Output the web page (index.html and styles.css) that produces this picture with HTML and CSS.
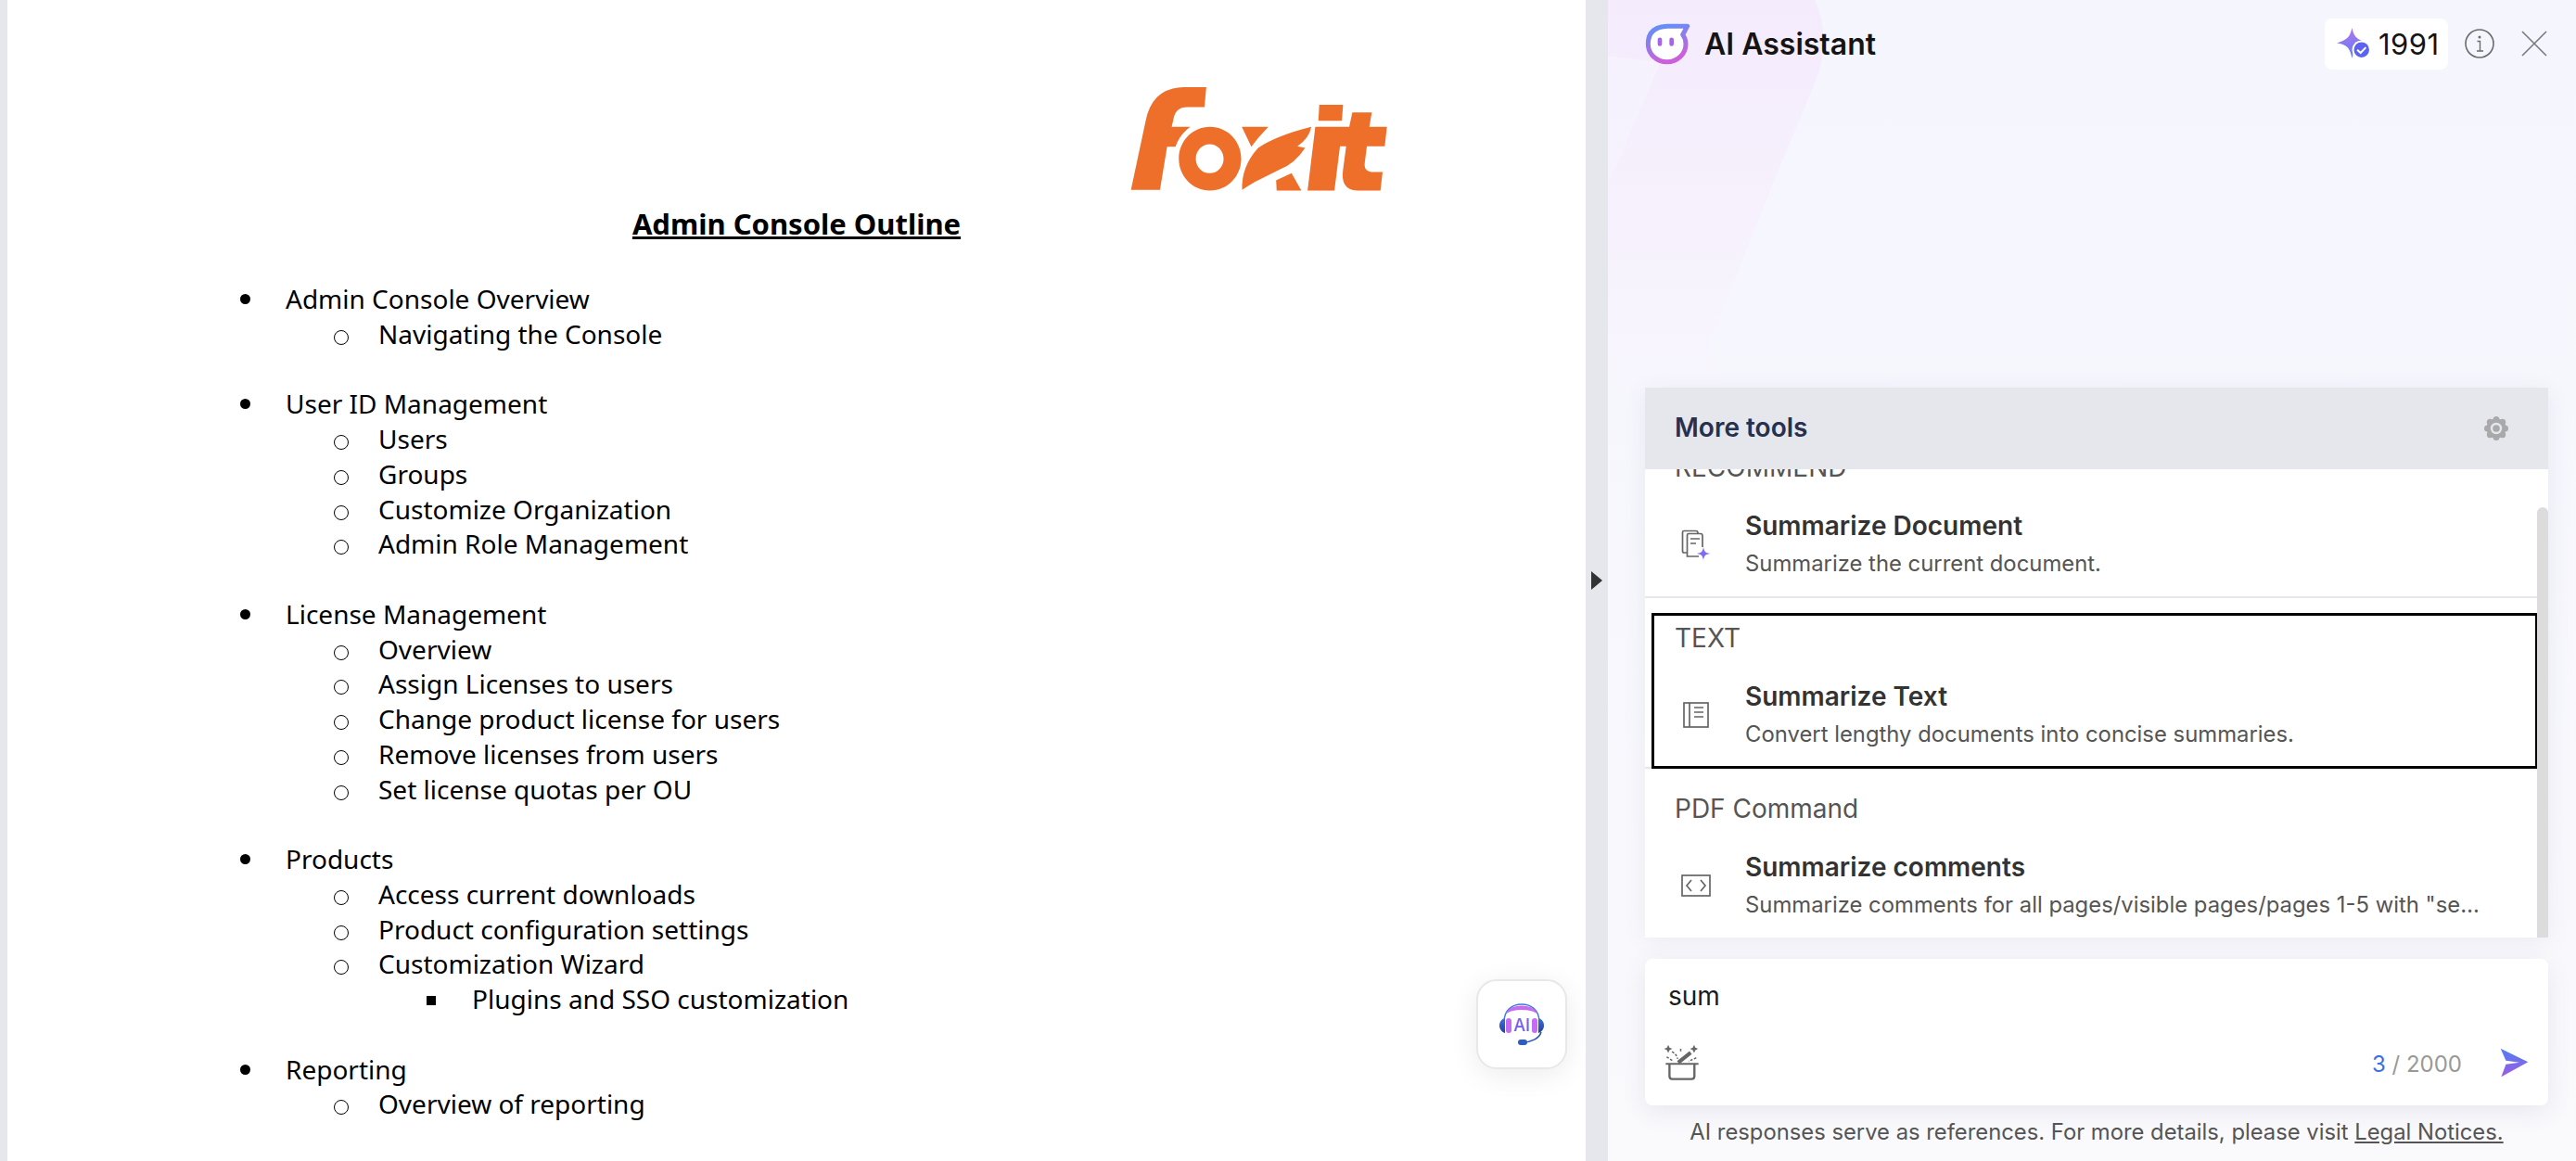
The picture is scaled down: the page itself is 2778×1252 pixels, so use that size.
FILE: index.html
```html
<!DOCTYPE html>
<html lang="en">
<head>
<meta charset="utf-8">
<title>Admin Console Outline - AI Assistant</title>
<link rel="stylesheet" href="styles.css">
</head>
<body>
<div class="app">
  <div class="strip"></div>
  <main class="page">
    <svg class="logo" viewBox="50 95 850 350" width="283" height="117" aria-label="Foxit">
      <g fill="#ee6f2a">
        <path d="M58 436 L105 215 Q125 105 230 103 L302 103 L296 168 L240 168 Q205 168 197 200 L190 232 L250 232 Q215 258 202 296 L175 296 L152 436 Z"/>
        <path fill-rule="evenodd" d="M314 232 C370 232 415 278 415 335 C415 392 370 438 314 438 C258 438 213 392 213 335 C213 278 258 232 314 232 Z M313 288 C288 288 268 309 268 335 C268 361 288 382 313 382 C338 382 358 361 358 335 C358 309 338 288 313 288 Z"/>
        <path d="M417 232 L503 232 L470 268 L448 296 Z"/>
        <path d="M528 405 L578 382 L610 438 L530 438 Z"/>
        <path d="M418 436 Q415 360 470 300 Q530 260 642 232 Q635 270 597 295 L622 300 Q590 350 540 370 Q490 395 460 410 Q435 425 418 436 Z"/>
        <path d="M668 160 L745 160 L741 212 L665 212 Z"/>
        <path d="M630 438 L655 232 L765 232 L775 185 L838 185 L830 232 L887 232 L880 295 L822 295 L815 350 Q812 378 845 378 L873 378 L866 438 L790 438 Q735 436 745 370 L755 295 L735 295 L717 438 Z"/>
      </g>
    </svg>
    <h1 class="doc-title">Admin Console Outline</h1>
    <ul class="l1">
      <li>Admin Console Overview
        <ul class="l2"><li>Navigating the Console</li></ul>
      </li>
      <li>User ID Management
        <ul class="l2">
          <li>Users</li><li>Groups</li><li>Customize Organization</li><li>Admin Role Management</li>
        </ul>
      </li>
      <li>License Management
        <ul class="l2">
          <li>Overview</li><li>Assign Licenses to users</li><li>Change product license for users</li><li>Remove licenses from users</li><li>Set license quotas per OU</li>
        </ul>
      </li>
      <li>Products
        <ul class="l2">
          <li>Access current downloads</li><li>Product configuration settings</li>
          <li>Customization Wizard
            <ul class="l3"><li>Plugins and SSO customization</li></ul>
          </li>
        </ul>
      </li>
      <li>Reporting
        <ul class="l2"><li>Overview of reporting</li></ul>
      </li>
    </ul>
    <button class="help-fab" type="button" aria-label="AI support">
      <svg viewBox="0 0 56 56" width="56" height="56">
        <defs>
          <linearGradient id="cup" x1="0" y1="0" x2="0" y2="1"><stop offset="0" stop-color="#3f6fd8"/><stop offset="1" stop-color="#243f9c"/></linearGradient>
          <linearGradient id="aiText" x1="0" y1="0" x2="0" y2="1"><stop offset="0" stop-color="#8a5cf0"/><stop offset="1" stop-color="#5a62e8"/></linearGradient>
        </defs>
        <path d="M9 25 C9 12 18 6 28 6 C38 6 47 12 47 25" fill="none" stroke="#3f79dc" stroke-width="1.4"/>
        <path d="M12 15 C18 6 38 6 44 15 C38 10 18 10 12 15 Z" fill="#c56cf2" stroke="#c56cf2" stroke-width="1.6"/>
        <path d="M10 21 L10 37 C6 36 4 32 4 29 C4 25 6 22 10 21 Z" fill="url(#cup)"/>
        <path d="M46 21 L46 37 C50 36 52 32 52 29 C52 25 50 22 46 21 Z" fill="url(#cup)"/>
        <rect x="11" y="21" width="6" height="16" rx="3" fill="#c56cf2"/>
        <rect x="39" y="21" width="6" height="16" rx="3" fill="#c56cf2"/>
        <text class="fab-ai" x="28" y="35" text-anchor="middle" fill="url(#aiText)">AI</text>
        <path d="M49 36 C47 43 38 47 29 47" fill="none" stroke="#2c55b8" stroke-width="1.6"/>
        <rect x="24" y="44" width="10" height="6" rx="3" fill="#2d5cc4"/>
      </svg>
    </button>
  </main>
  <div class="divider"><span class="collapse-arrow"></span></div>
  <aside class="panel">
    <svg class="panel-blob" viewBox="0 0 1044 420" width="1044" height="420" aria-hidden="true">
      <defs><linearGradient id="blobFade" x1="0" y1="0" x2="0" y2="1"><stop offset="0" stop-color="#f4e9fc"/><stop offset="1" stop-color="#f8f6fd"/></linearGradient></defs>
      <path d="M0 0 L223 0 Q240 35 227 80 L177 200 L110 370 L127 420 L0 420 Z" fill="url(#blobFade)" opacity=".85"/>
      <path d="M0 60 L57 67 L0 200 Z" fill="#f6f4fe" opacity=".7"/>
    </svg>
    <header class="panel-head">
      <svg class="bot" viewBox="115 68 150 140" width="50" height="47" aria-hidden="true">
        <defs><linearGradient id="botG" x1="0" y1="0" x2="0.3" y2="1"><stop offset="0" stop-color="#5a93fa"/><stop offset="1" stop-color="#cc60dc"/></linearGradient></defs>
        <path d="M255 80 L190 80 Q128 82 128 138 A61 58 0 0 0 250 138 Q250 120 240 108 Z" fill="#fff" stroke="url(#botG)" stroke-width="15" stroke-linejoin="round"/>
        <rect x="159" y="117" width="14" height="28" rx="7" fill="#a665e8"/>
        <rect x="197" y="117" width="14" height="28" rx="7" fill="#a665e8"/>
      </svg>
      <h2 class="panel-title">AI Assistant</h2>
      <div class="credits">
        <svg viewBox="0 0 35 35" width="36" height="36" aria-hidden="true">
          <defs><linearGradient id="starG" x1="0" y1="0" x2="0" y2="1"><stop offset="0" stop-color="#b373ee"/><stop offset="1" stop-color="#5d7ff5"/></linearGradient></defs>
          <path d="M16 1 C18 11 22 14 32 16 C22 18 18 22 16 33 C14 22 10 18 0 17 C10 14 14 11 16 1 Z" fill="url(#starG)"/>
          <circle cx="26" cy="24" r="9" fill="#5c63f0" stroke="#fff" stroke-width="2"/>
          <path d="M21.5 24 L25 27.2 L30.5 21.5" fill="none" stroke="#fff" stroke-width="2"/>
        </svg>
        <span class="credits-num">1991</span>
      </div>
      <button class="head-btn" type="button" aria-label="Info">
        <svg viewBox="0 0 32 32" width="32" height="32"><circle cx="16" cy="16" r="15" fill="none" stroke="#6b6b6b" stroke-width="1.6"/><circle cx="16" cy="9" r="1.5" fill="#6b6b6b"/><path d="M13.5 13.5 H16.5 V24 M13 24 H20" fill="none" stroke="#6b6b6b" stroke-width="1.4"/></svg>
      </button>
      <button class="head-btn close" type="button" aria-label="Close">
        <svg viewBox="0 0 28 28" width="28" height="28"><path d="M1 1 L27 27 M27 1 L1 27" stroke="#7a7a7a" stroke-width="1.6"/></svg>
      </button>
    </header>
    <section class="tools">
      <div class="tools-head">
        <span class="tools-title">More tools</span>
        <svg viewBox="0 0 28 28" width="28" height="28" aria-hidden="true">
          <g fill="#a9a9ab">
            <circle cx="14" cy="14" r="10.5"/>
            <circle cx="14" cy="4.5" r="3.5"/><circle cx="14" cy="23.5" r="3.5"/><circle cx="4.5" cy="14" r="3.5"/><circle cx="23.5" cy="14" r="3.5"/>
            <circle cx="7.3" cy="7.3" r="3.5"/><circle cx="20.7" cy="7.3" r="3.5"/><circle cx="7.3" cy="20.7" r="3.5"/><circle cx="20.7" cy="20.7" r="3.5"/>
          </g>
          <circle cx="14" cy="14" r="5" fill="none" stroke="#e6e7ed" stroke-width="2.4"/>
        </svg>
      </div>
      <div class="tools-list">
        <div class="tool-section first">
          <div class="section-label">RECOMMEND</div>
          <div class="tool">
            <svg class="tool-icon" viewBox="0 0 46 46" aria-hidden="true">
              <path d="M14 32 H10 Q8.500 32 8.500 30 V10 Q8.500 8.500 10 8.500 H23 Q25 8.500 25 11" fill="none" stroke="#666" stroke-width="1.700"/>
              <path d="M30 26 V14 Q30 11.500 28 11.500 H15 Q13.500 11.500 13.500 13 V36 H26" fill="none" stroke="#666" stroke-width="1.700"/>
              <path d="M17 17 H27 M17 22 H23" stroke="#666" stroke-width="1.700"/>
              <path d="M31 26 C32 31 33 32 38 33 C33 34 32 35 31 40 C30 35 29 34 24 33 C29 32 30 31 31 26 Z" fill="#7d6cf4"/>
            </svg>
            <div class="tool-text">
              <div class="tool-name">Summarize Document</div>
              <div class="tool-desc">Summarize the current document.</div>
            </div>
          </div>
        </div>
        <div class="tool-section focused">
          <div class="section-label">TEXT</div>
          <div class="tool">
            <svg class="tool-icon" viewBox="0 0 46 46" aria-hidden="true">
              <rect x="10" y="10" width="26" height="26" fill="none" stroke="#666" stroke-width="1.700"/>
              <path d="M16 10 V36 M21 15 H31 M21 20 H31 M21 25 H31" fill="none" stroke="#666" stroke-width="1.700"/>
            </svg>
            <div class="tool-text">
              <div class="tool-name">Summarize Text</div>
              <div class="tool-desc">Convert lengthy documents into concise summaries.</div>
            </div>
          </div>
        </div>
        <div class="tool-section last">
          <div class="section-label">PDF Command</div>
          <div class="tool">
            <svg class="tool-icon" viewBox="0 0 46 46" aria-hidden="true">
              <rect x="8" y="12" width="30" height="22" fill="none" stroke="#666" stroke-width="1.700"/>
              <path d="M18 17 L13 23 L18 29 M28 17 L33 23 L28 29" fill="none" stroke="#666" stroke-width="1.700"/>
            </svg>
            <div class="tool-text">
              <div class="tool-name">Summarize comments</div>
              <div class="tool-desc">Summarize comments for all pages/visible pages/pages 1-5 with "selected text" and more</div>
            </div>
          </div>
        </div>
        <div class="scroll-thumb"></div>
      </div>
    </section>
    <section class="composer">
      <div class="composer-input">sum</div>
      <div class="composer-foot">
        <svg class="magic" viewBox="100 320 125 125" width="42" height="42" aria-hidden="true">
          <path d="M122 388 V426 Q122 435 131 435 H193 Q202 435 202 426 V388" fill="none" stroke="#666" stroke-width="7"/>
          <path d="M110 386 H215" stroke="#666" stroke-width="6"/>
          <path d="M150 382 L190 350" stroke="#666" stroke-width="12"/>
          <path d="M118 325 L122 334 L131 338 L122 342 L118 351 L114 342 L105 338 L114 334 Z M201 325 L205 334 L214 338 L205 342 L201 351 L197 342 L188 338 L197 334 Z" fill="#666"/>
          <path d="M130 347 Q145 355 148 370 M158 338 V350 M113 364 L135 378 M208 367 L183 378" fill="none" stroke="#666" stroke-width="4.500" stroke-dasharray="8 5"/>
        </svg>
        <div class="counter"><span class="count-now">3</span> / 2000</div>
        <svg class="send" viewBox="650 95 98 100" width="33" height="34" aria-hidden="true">
          <defs><linearGradient id="sendG" x1="0" y1="0" x2="0" y2="1"><stop offset="0" stop-color="#4d7ff5"/><stop offset="1" stop-color="#a05ae2"/></linearGradient></defs>
          <path d="M655 100 L743 143 L657 190 L672 150 L715 144 L672 138 Z" fill="url(#sendG)"/>
        </svg>
      </div>
    </section>
    <footer class="notice">AI responses serve as references. For more details, please visit <a class="notice-link" href="#">Legal Notices.</a></footer>
  </aside>
</div>
</body>
</html>
```
FILE: styles.css
```css
* { box-sizing: border-box; }
html, body { margin: 0; height: 100%; }
body { background: #fff; overflow: hidden; font-family: "Inter", "Liberation Sans", sans-serif; }
.app { display: flex; width: 2778px; height: 1252px; }
.strip { width: 8px; background: #e6e7ed; flex: none; }

.page {
  position: relative;
  width: 1702px;
  flex: none;
  padding-top: 91px;
  background: #fff;
  color: #000;
  font-family: "Noto Sans", "Liberation Sans", sans-serif;
  font-size: 28px;
  line-height: 37.75px;
  overflow: hidden;
}
.logo { display: block; margin-left: 1209px; }
.doc-title {
  margin: 14px 0 44px;
  font-size: 31px;
  line-height: 38px;
  font-weight: 700;
  text-align: center;
  text-decoration: underline;
}
ul { list-style: none; margin: 0; padding: 0; }
.l1 { padding-left: 300px; }
.l1 > li { position: relative; margin-bottom: 37.75px; }
.l1 > li::before {
  content: "";
  position: absolute;
  left: -49px;
  top: 13px;
  width: 11px;
  height: 11px;
  border-radius: 50%;
  background: #000;
}
.l2 { padding-left: 100px; }
.l2 > li { position: relative; }
.l2 > li::before {
  content: "";
  position: absolute;
  left: -48px;
  top: 14px;
  width: 14px;
  height: 14px;
  border-radius: 50%;
  border: 1.500px solid #000;
}
.l3 { padding-left: 101px; }
.l3 > li { position: relative; }
.l3 > li::before {
  content: "";
  position: absolute;
  left: -49px;
  top: 15px;
  width: 10px;
  height: 10px;
  background: #000;
}
.help-fab {
  position: absolute;
  right: 20px;
  bottom: 99px;
  width: 98px;
  height: 97px;
  display: flex;
  align-items: center;
  justify-content: center;
  padding: 0;
  background: #fff;
  border: 2px solid #e8e8e8;
  border-radius: 22px;
  box-shadow: 0 6px 30px rgba(0, 0, 0, .08);
}
.fab-ai { font: 500 18px "Inter", sans-serif; }

.divider {
  width: 24px;
  flex: none;
  background: #e6e7ed;
  display: flex;
  align-items: center;
  justify-content: center;
}
.collapse-arrow {
  width: 0;
  height: 0;
  border-left: 12px solid #333;
  border-top: 10px solid transparent;
  border-bottom: 10px solid transparent;
}

.panel {
  position: relative;
  width: 1044px;
  flex: none;
  display: flex;
  flex-direction: column;
  padding: 0 30px 0 40px;
  background: linear-gradient(180deg, #f5f5fe 0%, #f7f7fd 50%, #fafafd 100%);
  overflow: hidden;
}
.panel-blob { position: absolute; left: 0; top: 0; }
.panel-head {
  position: relative;
  display: flex;
  align-items: center;
  height: 94px;
  flex: none;
}
.bot { flex: none; margin-left: -1px; }
.panel-title {
  margin: 0 0 0 15px;
  flex: 1;
  font-size: 32px;
  font-weight: 600;
  color: #141414;
}
.credits {
  display: flex;
  align-items: center;
  gap: 9px;
  width: 133px;
  height: 55px;
  padding-left: 13px;
  background: #fff;
  border-radius: 8px;
}
.credits-num { font-size: 31px; letter-spacing: .5px; color: #141414; }
.head-btn {
  display: flex;
  padding: 0;
  margin-left: 18px;
  background: none;
  border: 0;
}
.head-btn.close { margin: 0 1px 0 29px; }

.tools {
  position: relative;
  margin-top: 324px;
  height: 593px;
  flex: none;
  display: flex;
  flex-direction: column;
  box-shadow: 0 4px 24px rgba(60, 60, 100, .08);
}
.tools-head {
  display: flex;
  align-items: center;
  justify-content: space-between;
  height: 88px;
  flex: none;
  padding: 0 42px 0 32px;
  background: #e6e7ed;
}
.tools-title { font-size: 28px; font-weight: 600; line-height: 84px; margin-bottom: 3px; color: #27304f; }
.tools-list {
  position: relative;
  flex: 1;
  background: #fff;
  overflow: hidden;
}
.tool-section {
  position: relative;
  height: 184px;
  padding-left: 32px;
  border-bottom: 2px solid #e6e7ed;
}
.tool-section.first { margin-top: -45px; }
.tool-section.last { border-bottom: 0; }
.tool-section.focused::after {
  content: "";
  position: absolute;
  left: 7px;
  right: 11px;
  top: 16px;
  bottom: -2px;
  border: 3px solid #000;
}
.section-label {
  padding-top: 26px;
  height: 66px;
  font-size: 28px;
  line-height: 34px;
  color: #555;
}
.tool { display: flex; align-items: flex-start; padding-top: 18px; }
.tool-icon { width: 46px; height: 46px; margin-top: 19px; flex: none; }
.tool-text { margin-left: 30px; min-width: 0; }
.tool-name {
  font-size: 28px;
  line-height: 40px;
  font-weight: 600;
  color: #333;
  padding-top: 2px;
}
.tool-desc {
  max-width: 796px;
  font-size: 23.85px;
  line-height: 36px;
  margin-top: 3px;
  color: #555;
  white-space: nowrap;
  overflow: hidden;
  text-overflow: ellipsis;
}
.scroll-thumb {
  position: absolute;
  right: 0;
  top: 41px;
  bottom: 0;
  width: 12px;
  background: #dcdcdc;
  border-radius: 6px 6px 0 0;
}

.composer {
  position: relative;
  margin-top: 23px;
  height: 158px;
  flex: none;
  padding: 22px 20px 0 19px;
  background: #fff;
  border-radius: 8px;
  box-shadow: 0 6px 26px rgba(60, 60, 100, .1);
}
.composer-input { font-size: 28px; line-height: 36px; color: #1c1c1c; padding-left: 6px; }
.composer-foot {
  display: flex;
  align-items: center;
  margin-top: 33px;
}
.magic { flex: none; margin-right: auto; }
.counter { font-size: 24px; line-height: 30px; color: #999; margin: 4px 40px 0 0; }
.count-now { color: #3a70e2; }
.send { flex: none; }
.notice {
  position: relative;
  margin-top: 13px;
  font-size: 23.8px;
  line-height: 32px;
  text-align: center;
  color: #555;
}
.notice-link { color: #555; text-decoration: underline; }
```
